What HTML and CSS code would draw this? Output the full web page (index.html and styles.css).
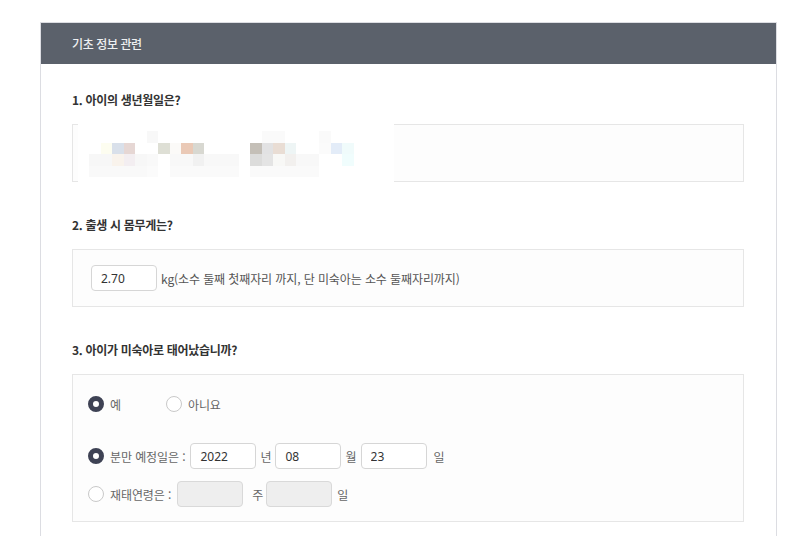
FILE: index.html
```html
<!DOCTYPE html>
<html lang="ko">
<head>
<meta charset="utf-8">
<title>기초 정보 관련</title>
<link rel="stylesheet" href="styles.css">
</head>
<body>
<div class="panel">
  <div class="panel-head">기초 정보 관련</div>
  <div class="panel-body">
    <section class="q">
      <h3 class="q-title">1. 아이의 생년월일은?</h3>
      <div class="box box-birth">
        <div class="blur">
          <span></span><span></span><span></span><span></span><span></span><span style="background:#f8f8f8"></span><span></span><span></span><span></span><span></span><span></span><span></span><span></span><span></span><span></span><span style="background:#fafafa"></span><span style="background:#fafafa"></span><span></span><span></span><span></span><span style="background:#fafafa"></span><span></span><span></span>
          <span></span><span style="background:#fdfdf0"></span><span style="background:#d9e0ea"></span><span style="background:#e6d7d4"></span><span></span><span></span><span style="background:#dedfd5"></span><span style="background:#fbfaf8"></span><span style="background:#eac9b6"></span><span style="background:#d8d8d1"></span><span></span><span></span><span></span><span></span><span style="background:#c4bfb7"></span><span style="background:#e2e2e3"></span><span style="background:#e9ddd4"></span><span style="background:#eef5f5"></span><span></span><span></span><span style="background:#fbfbfb"></span><span style="background:#e3ecf8"></span><span style="background:#f0fbfb"></span>
          <span style="background:#f7f7f7"></span><span style="background:#f7f7f7"></span><span style="background:#f9f3ec"></span><span style="background:#f3eef1"></span><span style="background:#f7f7f7"></span><span style="background:#f9f9f9"></span><span></span><span style="background:#f8f8f8"></span><span style="background:#f8f8f8"></span><span style="background:#f1f1f1"></span><span style="background:#f8f8f8"></span><span style="background:#f8f8f8"></span><span style="background:#f8f8f8"></span><span></span><span style="background:#dcdcdb"></span><span style="background:#e4e4e4"></span><span style="background:#f8f8f6"></span><span style="background:#f2f0ee"></span><span style="background:#f8f8f8"></span><span style="background:#f8f8f8"></span><span></span><span></span><span style="background:#f0fdfd"></span>
          <span style="background:#f9f9f9"></span><span style="background:#f9f9f9"></span><span style="background:#f9f9f9"></span><span style="background:#f9f9f9"></span><span style="background:#f9f9f9"></span><span style="background:#fbfbfb"></span><span></span><span style="background:#fafafa"></span><span style="background:#fafafa"></span><span style="background:#fafafa"></span><span style="background:#fafafa"></span><span style="background:#fafafa"></span><span style="background:#fafafa"></span><span></span><span style="background:#fafafa"></span><span style="background:#fafafa"></span><span style="background:#fafafa"></span><span style="background:#fafafa"></span><span style="background:#fafafa"></span><span style="background:#fafafa"></span><span></span><span></span><span></span>
        </div>
      </div>
    </section>

    <section class="q">
      <h3 class="q-title">2. 출생 시 몸무게는?</h3>
      <div class="box box-weight">
        <input class="field" type="text" value="2.70">
        <span class="hint">kg(소수 둘째 첫째자리 까지, 단 미숙아는 소수 둘째자리까지)</span>
      </div>
    </section>

    <section class="q">
      <h3 class="q-title">3. 아이가 미숙아로 태어났습니까?</h3>
      <div class="box box-premature">
        <div class="row row-choice">
          <label class="opt"><span class="radio checked"></span><span class="lbl">예</span></label>
          <label class="opt"><span class="radio"></span><span class="lbl">아니요</span></label>
        </div>
        <div class="row row-due">
          <span class="radio checked"></span>
          <span class="lbl">분만 예정일은 :</span>
          <input class="field" type="text" value="2022">
          <span class="unit">년</span>
          <input class="field" type="text" value="08">
          <span class="unit">월</span>
          <input class="field" type="text" value="23">
          <span class="unit unit-last">일</span>
        </div>
        <div class="row row-age">
          <span class="radio"></span>
          <span class="lbl">재태연령은 :</span>
          <input class="field" type="text" value="" disabled>
          <span class="unit unit-week">주</span>
          <input class="field" type="text" value="" disabled>
          <span class="unit unit-day">일</span>
        </div>
      </div>
    </section>
  </div>
</div>
</body>
</html>
```

FILE: styles.css
```css
* { box-sizing: border-box; }

html, body {
  margin: 0;
  padding: 0;
  background: #ffffff;
}

body {
  font-family: "Noto Sans", "Noto Sans CJK KR", sans-serif;
  font-size: 12px;
  color: #555;
  overflow: hidden;
  height: 536px;
}

.panel {
  margin: 22px 0 0 40px;
  width: 737px;
  height: 514px;
  overflow: hidden;
  border: 1px solid #dcdde2;
  border-bottom: none;
  background: #fff;
}

.panel-head {
  height: 41px;
  background: #5b616b;
  color: #eef0f2;
  font-family: "Noto Sans CJK KR", sans-serif;
  font-size: 12px;
  font-weight: 500;
  letter-spacing: -0.4px;
  display: flex;
  align-items: center;
  padding-left: 31px;
}

.panel-body {
  padding: 28px 32px 0 31px;
}

.q + .q {
  margin-top: 35px;
}

.q-title {
  margin: 0 0 16px;
  font-family: "Noto Sans CJK KR", sans-serif;
  font-size: 12px;
  font-weight: 700;
  line-height: 16px;
  color: #333;
  letter-spacing: -0.3px;
}

.box {
  border: 1px solid #e6e6e6;
  background: #fdfdfd;
}

.box-birth {
  height: 58px;
  position: relative;
}

.blur {
  position: absolute;
  left: 5px;
  top: -1px;
  width: 316px;
  height: 60px;
  background: #ffffff;
  display: grid;
  grid-template-columns: repeat(23, 11.5px);
  grid-auto-rows: 11.5px;
  padding: 7px 0 0 11px;
}

.box-weight {
  height: 58px;
  display: flex;
  align-items: center;
  padding-left: 18px;
}

.field {
  width: 66px;
  height: 26px;
  border: 1px solid #d6d6d6;
  border-radius: 4px;
  background: #fff;
  padding: 0 9px;
  font-family: "Noto Sans", "Noto Sans CJK KR", sans-serif;
  font-size: 12px;
  color: #333;
  outline: none;
}

.field:disabled {
  background: #eeeeee;
  border-color: #d9d9d9;
}

.hint {
  margin-left: 4px;
  font-family: "Noto Sans CJK KR", sans-serif;
  font-size: 12px;
  color: #555;
  letter-spacing: -0.1px;
}

.box-premature {
  height: 148px;
  padding: 19px 16px 0 15px;
}

.row {
  display: flex;
  align-items: center;
}

.row-choice {
  height: 20px;
  gap: 40px;
}

.row-due {
  margin-top: 29px;
  height: 26px;
}

.row-age {
  margin-top: 12px;
  height: 26px;
}

.opt {
  display: flex;
  align-items: center;
}

.radio {
  width: 16px;
  height: 16px;
  border-radius: 50%;
  border: 1px solid #c9c9c9;
  background: #fff;
  flex: none;
}

.radio.checked {
  border: 5px solid #3e4254;
}

.lbl {
  margin-left: 6px;
  margin-right: 5px;
  font-family: "Noto Sans CJK KR", sans-serif;
  font-size: 12px;
  color: #666;
  letter-spacing: -0.1px;
}

.row-age .lbl {
  margin-right: 6px;
}

.unit {
  margin: 0 4px;
  font-family: "Noto Sans CJK KR", sans-serif;
  font-size: 12px;
  color: #666;
}

.unit-last {
  margin-left: 7px;
}

.unit-week {
  margin: 0 3px 0 9px;
}

.unit-day {
  margin-left: 5px;
}
```
